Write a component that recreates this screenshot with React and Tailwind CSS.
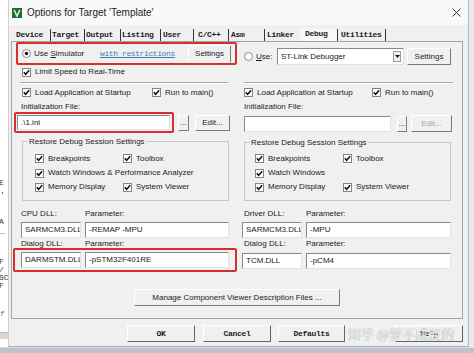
import React from "react";

const SANS = "font-['Liberation_Sans',Arial,sans-serif]";
const MONO = "font-['Liberation_Mono','Courier_New',monospace]";

const TABS = [
  { label: "Device", cls: "w-[35px] border-r" },
  { label: "Target", cls: "w-[34px] pl-[1px] border-r" },
  { label: "Output", cls: "w-[36px] pl-[1px] border-r" },
  { label: "Listing", cls: "w-[40px] pl-[1px] border-r" },
  { label: "User", cls: "w-[33px] pl-[2px] border-r" },
  { label: "C/C++", cls: "w-[35px] pl-[4px] border-r" },
  { label: "Asm", cls: "w-[36px] pl-[2px] border-r" },
  { label: "Linker", cls: "w-[35px] pl-[2px]" },
  { label: "Debug", cls: "w-[37px] pl-[5px] pb-[2px] bg-[#f7f7f7]" },
  { label: "Utilities", cls: "w-[49px] pl-[3px] border-l border-r" },
];

function Check({ label, className = "" }) {
  return (
    <div className={`flex items-center ${className}`}>
      <svg width="9" height="9" viewBox="0 0 9 9" className="shrink-0">
        <rect x="0.5" y="0.5" width="8" height="8" fill="#fff" stroke="#858585" />
        <path d="M1.8 4.2 L3.6 6.3 L7.2 2.2" fill="none" stroke="#111" strokeWidth="1.5" />
      </svg>
      <span className="ml-[4px] whitespace-nowrap">{label}</span>
    </div>
  );
}

function Radio({ on }) {
  return (
    <svg width="9" height="9" viewBox="0 0 9 9" className="shrink-0">
      <circle cx="4.5" cy="4.5" r="4" fill="#fff" stroke="#8a8a8a" />
      {on && <circle cx="4.5" cy="4.5" r="1.7" fill="#111" />}
    </svg>
  );
}

function Field({ children, className = "" }) {
  return (
    <div
      className={`flex items-center bg-white border border-t-[#8a8a8a] border-l-[#8a8a8a] border-r-[#e2e2e2] border-b-[#e2e2e2] pl-[3px] whitespace-nowrap overflow-hidden ${className}`}
    >
      {children}
    </div>
  );
}

function Btn({ children, className = "", disabled }) {
  return (
    <div
      className={`flex items-center justify-center bg-[#f0f0f0] border border-t-white border-l-white border-r-[#7a7a7a] border-b-[#7a7a7a] whitespace-nowrap ${
        disabled ? "text-[#a6a6a6]" : ""
      } ${className}`}
    >
      {children}
    </div>
  );
}

function RedBox({ children, className = "" }) {
  return <div className={`border-2 border-[#d3302f] rounded-[2px] flex items-center ${className}`}>{children}</div>;
}

function Separator({ className = "" }) {
  return <div className={`h-[2px] border-t border-t-[#a8a8a8] border-b border-b-white ${className}`} />;
}

function Group({ className = "", children }) {
  return (
    <div className={`relative border border-[#c6c6c6] ${className}`}>
      <span className="absolute left-[5px] top-[-6px] px-[1px] bg-[#f0f0f0] leading-[11px]">
        Restore Debug Session Settings
      </span>
      {children}
    </div>
  );
}

function LeftColumn() {
  return (
    <div className="w-[228px] flex flex-col">
      <RedBox className="ml-[4px] w-[221px] h-[23px]">
        <div className="ml-[4px] w-[78px] shrink-0 flex items-center">
          <Radio on />
          <span className="ml-[3px]">
            Use <span className="underline">S</span>imulator
          </span>
        </div>
        <span
          className={`w-[80px] shrink-0 whitespace-nowrap ${MONO} text-[8px] tracking-[-0.4px] text-[#3b7db6] underline`}
        >
          with restrictions
        </span>
        <Btn className="ml-[8px] w-[43px] h-[18px] border-t-[#f0f0f0] border-l-[#f0f0f0] border-b-[#f0f0f0]">
          Settings
        </Btn>
      </RedBox>
      <Check label="Limit Speed to Real-Time" className="ml-[10px] h-[14px]" />
      <Separator className="mt-[3px] ml-[8px] w-[208px]" />
      <div className="mt-[2px] ml-[10px] h-[13px] flex items-center">
        <Check label="Load Application at Startup" className="w-[130px]" />
        <Check label="Run to main()" />
      </div>
      <div className="mt-[2px] ml-[9px] h-[12px] flex items-center">Initialization File:</div>
      <div className="-mt-[1px] flex items-center">
        <RedBox className="ml-[2px] w-[160px] h-[21px]">
          <Field className="ml-[1px] w-[153px] h-[15px]">.\1.ini</Field>
        </RedBox>
        <Btn className="ml-[4px] w-[11px] h-[16px]">...</Btn>
        <Btn className="ml-[6px] w-[35px] h-[16px]">Edit...</Btn>
      </div>
      <Group className="mt-[8px] ml-[10px] w-[207px] h-[60px] pt-[9px] pl-[12px]">
        <div className="h-[15px] flex items-center">
          <Check label="Breakpoints" className="w-[88px]" />
          <Check label="Toolbox" />
        </div>
        <div className="h-[14px] flex items-center">
          <Check label="Watch Windows & Performance Analyzer" />
        </div>
        <div className="h-[14px] flex items-center">
          <Check label="Memory Display" className="w-[88px]" />
          <Check label="System Viewer" />
        </div>
      </Group>
      <div className="mt-[7px] ml-[9px] h-[12px] flex items-center">
        <span className="w-[64px]">CPU DLL:</span>
        <span>Parameter:</span>
      </div>
      <div className="mt-[2px] ml-[9px] flex">
        <Field className="w-[60px] h-[16px]">SARMCM3.DLL</Field>
        <Field className="ml-[4px] w-[144px] h-[16px]">-REMAP -MPU</Field>
      </div>
      <div className="ml-[9px] h-[11px] flex items-center">
        <span className="w-[64px]">Dialog DLL:</span>
        <span>Parameter:</span>
      </div>
      <RedBox className="-mt-[1px] ml-[1px] w-[224px] h-[24px] pl-[6px]">
        <Field className="w-[60px] h-[16px]">DARMSTM.DLL</Field>
        <Field className="ml-[4px] w-[144px] h-[16px]">-pSTM32F401RE</Field>
      </RedBox>
    </div>
  );
}

function RightColumn() {
  return (
    <div className="flex-1 flex flex-col">
      <div className="mt-[6px] ml-[4px] h-[17px] flex items-center">
        <Radio />
        <span className="ml-[3px] w-[21px]">
          <span className="underline">U</span>se:
        </span>
        <Field className="w-[127px] h-[17px] justify-between pr-[2px]">
          <span>ST-Link Debugger</span>
          <span className="w-[8px] h-[11px] flex items-center justify-center bg-[#f0f0f0] border border-[#9a9a9a]">
            <svg width="5" height="3" viewBox="0 0 5 3">
              <path d="M0 0 L5 0 L2.5 3 Z" fill="#111" />
            </svg>
          </span>
        </Field>
        <Btn className="ml-[3px] w-[44px] h-[17px]">Settings</Btn>
      </div>
      <Separator className="mt-[17px] ml-[4px] w-[209px]" />
      <div className="mt-[2px] ml-[4px] h-[13px] flex items-center">
        <Check label="Load Application at Startup" className="w-[128px]" />
        <Check label="Run to main()" />
      </div>
      <div className="mt-[2px] ml-[4px] h-[12px] flex items-center">Initialization File:</div>
      <div className="mt-[2px] h-[17px] flex items-center">
        <Field className="ml-[4px] w-[147px] h-[16px]" />
        <Btn className="ml-[6px] w-[10px] h-[16px]">...</Btn>
        <Btn disabled className="ml-[4px] w-[41px] h-[17px]">
          Edit...
        </Btn>
      </div>
      <Group className="mt-[10px] ml-[4px] w-[207px] h-[59px] pt-[8px] pl-[10px]">
        <div className="h-[15px] flex items-center">
          <Check label="Breakpoints" className="w-[88px]" />
          <Check label="Toolbox" />
        </div>
        <div className="h-[14px] flex items-center">
          <Check label="Watch Windows" />
        </div>
        <div className="h-[14px] flex items-center">
          <Check label="Memory Display" className="w-[88px]" />
          <Check label="System Viewer" />
        </div>
      </Group>
      <div className="mt-[7px] ml-[4px] h-[12px] flex items-center">
        <span className="w-[62px]">Driver DLL:</span>
        <span>Parameter:</span>
      </div>
      <div className="mt-[2px] ml-[2px] flex">
        <Field className="w-[60px] h-[16px]">SARMCM3.DLL</Field>
        <Field className="ml-[4px] w-[145px] h-[16px]">-MPU</Field>
      </div>
      <div className="ml-[4px] h-[11px] flex items-center">
        <span className="w-[62px]">Dialog DLL:</span>
        <span>Parameter:</span>
      </div>
      <div className="mt-[4px] ml-[2px] flex">
        <Field className="w-[60px] h-[16px]">TCM.DLL</Field>
        <Field className="ml-[4px] w-[145px] h-[16px]">-pCM4</Field>
      </div>
    </div>
  );
}

function LeftStrip() {
  return (
    <div className={`w-[8px] bg-white flex flex-col overflow-hidden ${MONO} text-[8px] leading-[8px] text-[#333]`}>
      <span className="mt-[179px] -ml-[1px]">E</span>
      <span className="mt-[4px]">'</span>
      <span className="mt-[19px] -ml-[1px]">A</span>
      <span className="mt-[1px]">_</span>
      <span className="mt-[23px] -ml-[1px]">F</span>
      <span className="-ml-[1px]">/</span>
      <span className="-ml-[1px]">SC</span>
      <span className="-ml-[1px]">F</span>
      <span className="mt-[20px] text-[#3a8a3a]">f</span>
      <div className="mt-[14px] h-[7px] bg-[#d9d8c8] border-t border-[#b9b9b0]" />
    </div>
  );
}

export default function App() {
  return (
    <div className={`w-[474px] h-[353px] overflow-hidden flex flex-col bg-[#c3c9d0] ${SANS} text-[8px] leading-none text-[#1b1b1b]`}>
      <div className="flex h-[347px]">
        <LeftStrip />
        <div className="w-[461px] flex flex-col bg-[#f0f0f0] border-l border-l-[#cfcfcf] border-r border-r-[#b8b8b8] border-b border-b-[#b0b0b0]">
          <div className="h-[25px] flex items-center bg-[#f9f9f9]">
            <svg width="10" height="10" viewBox="0 0 10 10" className="ml-[3px] shrink-0">
              <rect width="10" height="10" fill="#1f6e35" />
              <path d="M2.2 2 L5 8 L7.8 2" fill="none" stroke="#d9f0c8" strokeWidth="1.6" />
            </svg>
            <span className="ml-[5px] text-[10px] text-[#222]">Options for Target 'Template'</span>
            <svg width="9" height="9" viewBox="0 0 9 9" className="ml-auto mr-[7px]">
              <path d="M0.5 0.5 L8.5 8.5 M8.5 0.5 L0.5 8.5" stroke="#333" strokeWidth="1" />
            </svg>
          </div>
          <div className={`mt-[3px] pl-[7px] h-[13px] flex items-end ${MONO} text-[8px] font-bold tracking-[-0.3px]`}>
            {TABS.map((t) => (
              <span key={t.label} className={`h-[12px] flex items-center border-[#333] ${t.cls}`}>
                {t.label}
              </span>
            ))}
          </div>
          <div className="ml-[2px] w-[452px] h-[278px] border border-[#a3a3a3] flex flex-col">
            <div className="flex">
              <LeftColumn />
              <RightColumn />
            </div>
            <div className="mt-[17px] flex justify-center">
              <Btn className="w-[206px] h-[17px]">Manage Component Viewer Description Files ...</Btn>
            </div>
          </div>
          <div className={`relative mt-[6px] h-[17px] flex ${MONO} text-[8px] font-bold tracking-[-0.3px]`}>
            <Btn className="ml-[118px] w-[68px] h-[17px] border-[#8d8d8d] border-r-[#666] border-b-[#666]">OK</Btn>
            <Btn className="ml-[8px] w-[68px] h-[17px] border-[#8d8d8d] border-r-[#666] border-b-[#666]">Cancel</Btn>
            <Btn className="ml-[7px] w-[67px] h-[17px] border-[#8d8d8d] border-r-[#666] border-b-[#666]">Defaults</Btn>
            <Btn className="ml-[50px] w-[68px] h-[17px] border-[#8d8d8d] border-r-[#666] border-b-[#666]">Help</Btn>
            <span className="absolute left-[339px] top-[1px] font-['Noto_Sans_CJK_SC',sans-serif] font-normal tracking-normal text-[13px] leading-[15px] text-[#ececec] [text-shadow:0_0_1px_#8a8a8a]">
              知乎 @梦不成夏的
            </span>
          </div>
        </div>
        <div className="w-[5px] bg-[#e8eaed]" />
      </div>
      <div className="h-[6px] bg-[#bcc3cb] border-t border-[#d8dde2]" />
    </div>
  );
}
